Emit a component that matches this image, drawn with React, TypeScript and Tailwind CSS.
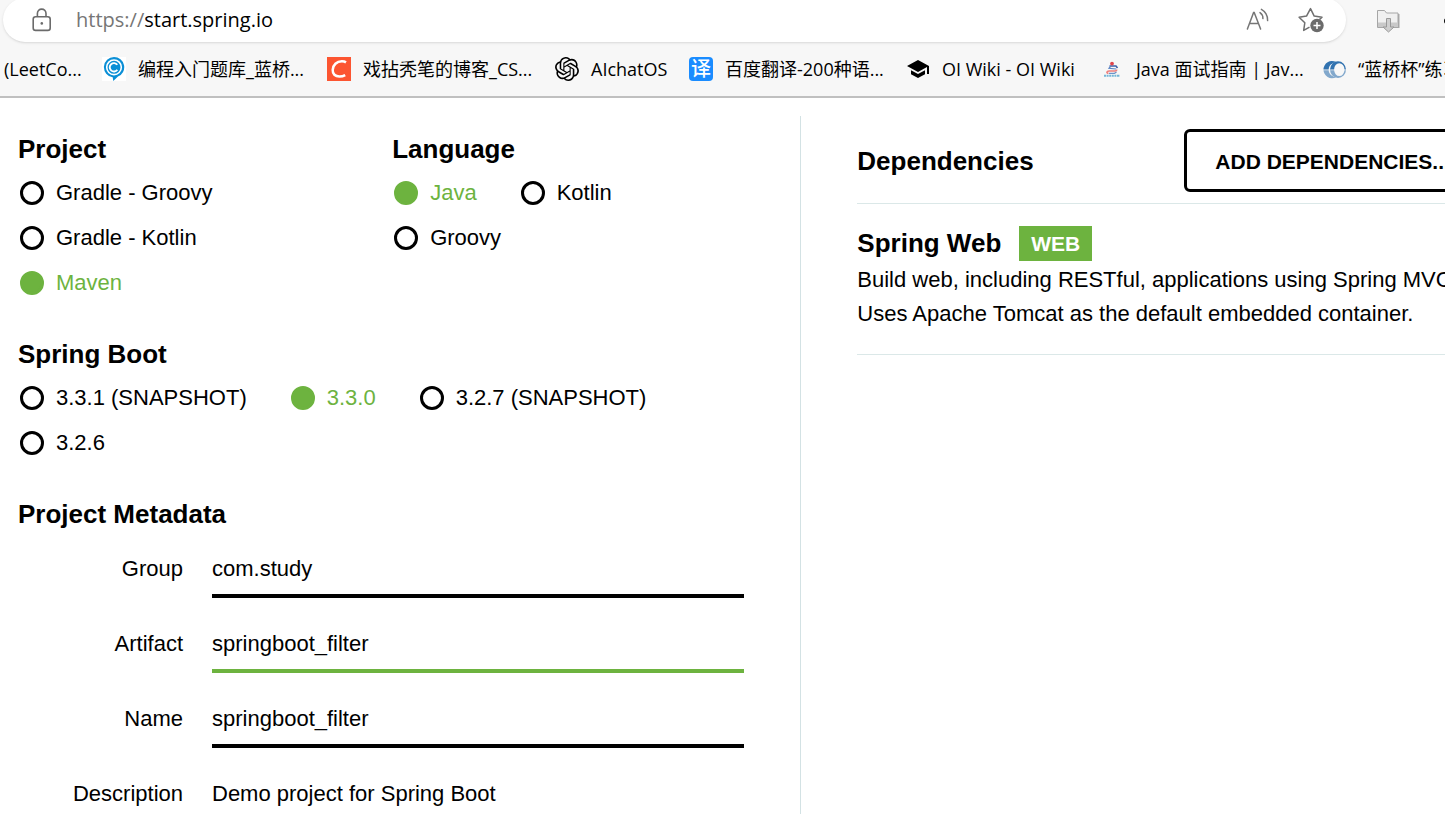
import { useState, type ReactNode } from 'react';
import { MdSchool } from 'react-icons/md';
import { SiOpenai } from 'react-icons/si';

interface Bookmark {
  title: string;
  width: string;
  icon?: ReactNode;
}

interface Option {
  id: string;
  label: string;
}

interface Field {
  id: string;
  label: string;
  value: string;
  active?: boolean;
}

const LockIcon = () => (
  <svg width="20" height="24" viewBox="0 0 20 24" fill="none" stroke="#6b6b6b" strokeWidth="1.6">
    <rect x="1.2" y="8.8" width="17" height="13.6" rx="2.4" />
    <path d="M5.4 8.6V5.4a4.3 4.3 0 0 1 8.6 0v3.2" />
    <circle cx="9.8" cy="15.4" r="1.3" fill="#6b6b6b" stroke="none" />
  </svg>
);

const ReadAloudIcon = () => (
  <svg width="24" height="24" viewBox="0 0 24 24" fill="none" stroke="#767676" strokeWidth="1.5" strokeLinecap="round">
    <path d="M1.4 21 7.6 4.4h.6L14.6 21M3.6 15.6h8.8" />
    <path d="M14 4.6c2 1.4 3 3.4 2.9 6M15.4 1.4c3.7 1.9 6.6 6.6 6.2 11.2" />
  </svg>
);

const StarIcon = () => (
  <svg width="26" height="26" viewBox="0 0 26 26" fill="none">
    <path
      d="M11.5 20.2 5.7 23.4l1.1-7.6L1.1 10.3l7.4-1.2L12.5 1.6l3.7 7.5 7.8 1.2-2.6 2.3"
      stroke="#6f6f6f"
      strokeWidth="1.5"
      strokeLinejoin="round"
    />
    <circle cx="19" cy="18.5" r="6.7" fill="#6b6b6b" />
    <path d="M19 15v7M15.5 18.5h7" stroke="#fff" strokeWidth="1.5" />
  </svg>
);

const DownloadFolderIcon = () => (
  <svg width="25" height="24" viewBox="0 0 25 24">
    <path d="M3 5h20.5v14H3z" fill="#a9a9a9" />
    <path d="M1.5 1.5h7L10.5 4H22v14.5H1.5z" fill="#f0f0f0" stroke="#a6a6a6" />
    <path d="M2 13.5h19.5V18H2z" fill="#c9c9c9" />
    <path d="M10.5 9.5h4V18H18l-5.5 5L7 18h3.5z" fill="#cfcfcf" stroke="#999" />
  </svg>
);

const LanqiaoIcon = () => (
  <svg width="24" height="24" viewBox="0 0 24 24">
    <path d="M0 0h24v24H0z" fill="#fff" />
    <path d="M12 0a10.2 10.2 0 0 1 4 19.6L11.3 24l-.6-3.7A10.2 10.2 0 0 1 12 0z" fill="#0b8fd6" />
    <circle cx="12" cy="10.3" r="7.3" fill="none" stroke="#fff" strokeWidth="1.6" />
    <path d="M15.3 7.8a4.2 4.2 0 1 0 0 5" fill="none" stroke="#fff" strokeWidth="1.9" />
  </svg>
);

const CsdnIcon = () => (
  <svg width="24" height="24" viewBox="0 0 24 24">
    <path d="M0 0h24v24H0z" fill="#fc5531" />
    <path
      d="M19 5.4c-1.2-.8-2.6-1.1-4.1-1.1C9.6 4.3 6 8 5.7 12.8c-.2 4.3 2.5 6.7 6.7 6.7 2 0 4-.4 5.800-1.400"
      fill="none"
      stroke="#fff"
      strokeWidth="2.5"
    />
  </svg>
);

const JavaGuideIcon = () => (
  <svg width="24" height="24" viewBox="0 0 24 24" fill="none">
    <path d="M9.500 9h6.500l1.500 2" stroke="#3d5fa8" strokeWidth="1.600" />
    <path d="M10.500 9.500 9 11.300l7 .7" stroke="#5a83c4" strokeWidth="1.200" />
    <circle cx="12" cy="6.600" r="1.900" fill="#e0444b" />
    <path d="M16.500 12.500c.8 1.400-1 1.600-3 1.600H9c-2.500 0-3 2-.5 2.200" stroke="#ee7f7c" strokeWidth="1.500" />
    <path d="M9 16.300h5.500l2-1.300" stroke="#6d92c8" strokeWidth="1.300" />
    <path d="M4 18.700h16" stroke="#74b6d8" strokeWidth="2" strokeDasharray="2 .6" />
  </svg>
);

const LanqiaoCupIcon = () => (
  <svg width="24" height="24" viewBox="0 0 24 24">
    <defs>
      <clipPath id="cup-top">
        <path d="M0 0h24v12.500H0z" />
      </clipPath>
      <clipPath id="cup-bottom">
        <path d="M0 13.200h24V24H0z" />
      </clipPath>
      <g id="cup-rings" fillRule="evenodd">
        <path d="M14 5A8.600 8.600 0 1 0 14 20.300 8 8 0 0 1 10.500 19 7 7 0 0 1 10.500 6.500 8 8 0 0 1 14 5z" />
        <path d="M16 4.200a8 8.400 0 1 1 0 16.800 8 8.400 0 1 1 0-16.800zM17.300 6.200a5.200 6.400 0 1 0 0 12.800 5.200 6.400 0 1 0 0-12.800z" />
      </g>
    </defs>
    <use href="#cup-rings" fill="#3273b0" clipPath="url(#cup-top)" />
    <use href="#cup-rings" fill="#82a8cc" clipPath="url(#cup-bottom)" />
  </svg>
);

const TranslateIcon = () => (
  <span className="flex size-6 items-center justify-center rounded bg-[#1a8cff] text-xl leading-none font-medium text-white">
    译
  </span>
);

const bookmarks: Bookmark[] = [
  { title: '(LeetCo...', width: 'w-[74px]' },
  { title: '编程入门题库_蓝桥...', width: 'w-[165px]', icon: <LanqiaoIcon /> },
  { title: '戏拈秃笔的博客_CS...', width: 'w-[168px]', icon: <CsdnIcon /> },
  { title: 'AIchatOS', width: 'w-[74px]', icon: <SiOpenai size={24} /> },
  { title: '百度翻译-200种语...', width: 'w-[157px]', icon: <TranslateIcon /> },
  { title: 'OI Wiki - OI Wiki', width: 'w-[134px]', icon: <MdSchool size={24} /> },
  { title: 'Java 面试指南 | Jav...', width: 'w-[162px]', icon: <JavaGuideIcon /> },
  { title: '“蓝桥杯”练习系统', width: 'w-[165px]', icon: <LanqiaoCupIcon /> },
];

const projects: Option[] = [
  { id: 'gradle-groovy', label: 'Gradle - Groovy' },
  { id: 'gradle-kotlin', label: 'Gradle - Kotlin' },
  { id: 'maven', label: 'Maven' },
];

const languages: Option[] = [
  { id: 'java', label: 'Java' },
  { id: 'kotlin', label: 'Kotlin' },
  { id: 'groovy', label: 'Groovy' },
];

const versions: Option[] = [
  { id: '3.3.1', label: '3.3.1 (SNAPSHOT)' },
  { id: '3.3.0', label: '3.3.0' },
  { id: '3.2.7', label: '3.2.7 (SNAPSHOT)' },
  { id: '3.2.6', label: '3.2.6' },
];

const fields: Field[] = [
  { id: 'group', label: 'Group', value: 'com.study' },
  { id: 'artifact', label: 'Artifact', value: 'springboot_filter', active: true },
  { id: 'name', label: 'Name', value: 'springboot_filter' },
  { id: 'description', label: 'Description', value: 'Demo project for Spring Boot' },
];

function BrowserBar() {
  return (
    <header className="overflow-hidden border-b-2 border-[#c0c0c0] bg-[#f7f7f7] font-['Open_Sans','Noto_Sans_CJK_SC',sans-serif]">
      <div className="flex items-center pl-[3px]">
        <div className="-mt-0.5 flex h-11 flex-1 items-center rounded-full bg-white pr-[22px] pl-[29px] shadow-sm">
          <LockIcon />
          <div className="ml-6 flex flex-1 text-xl text-black">
            <label htmlFor="address" className="text-[#767676]">
              https://
            </label>
            <input id="address" defaultValue="start.spring.io" className="min-w-0 flex-1 outline-none" />
          </div>
          <button aria-label="Read aloud" className="mr-7">
            <ReadAloudIcon />
          </button>
          <button aria-label="Add to favorites">
            <StarIcon />
          </button>
        </div>
        <button aria-label="Downloads" className="ml-[30px]">
          <DownloadFolderIcon />
        </button>
        <button aria-label="More" className="ml-[42px] w-0.5">
          <svg width="8" height="8" viewBox="0 0 8 8" className="max-w-none">
            <circle cx="4" cy="4" r="3" />
          </svg>
        </button>
      </div>
      <nav className="flex h-[54px] items-center gap-6 pl-1 text-lg whitespace-nowrap text-black">
        {bookmarks.map(({ title, width, icon }) => (
          <a key={title} href="#" className="flex shrink-0 items-center gap-3">
            {icon}
            <span className={width}>{title}</span>
          </a>
        ))}
      </nav>
    </header>
  );
}

interface OptionGroupProps {
  title: string;
  name: string;
  options: Option[];
  initial: string;
}

function OptionGroup({ title, name, options, initial }: OptionGroupProps) {
  const [selected, setSelected] = useState(initial);

  return (
    <fieldset>
      <legend className="mb-1.5 text-[26px] leading-[30px] font-bold">{title}</legend>
      <div className="flex flex-wrap gap-x-11 pl-0.5">
        {options.map((option) => (
          <label
            key={option.id}
            className={`flex h-[45px] items-center gap-3 ${selected === option.id ? 'text-[#6db33f]' : ''}`}
          >
            <input
              type="radio"
              name={name}
              checked={selected === option.id}
              onChange={() => setSelected(option.id)}
              className="size-6 shrink-0 appearance-none rounded-full border-3 border-black checked:border-[#6db33f] checked:bg-[#6db33f]"
            />
            {option.label}
          </label>
        ))}
      </div>
    </fieldset>
  );
}

function Metadata() {
  return (
    <section>
      <h2 className="text-[26px] leading-[30px] font-bold">Project Metadata</h2>
      <div className="mt-[13px]">
        {fields.map(({ id, label, value, active }) => (
          <div key={id} className="mb-[19px] flex h-14 items-stretch gap-[29px]">
            <label htmlFor={id} className="w-[165px] pt-[10px] text-right">
              {label}
            </label>
            <input
              id={id}
              defaultValue={value}
              className={`min-w-0 flex-1 border-b-4 outline-none ${active ? 'border-[#6db33f]' : 'border-black'}`}
            />
          </div>
        ))}
      </div>
    </section>
  );
}

function Dependencies() {
  return (
    <section className="overflow-hidden pt-[13px] pl-14">
      <div className="min-w-[680px]">
        <div className="flex items-center justify-between border-b border-[#dbe8e8] pb-[11px]">
          <h2 className="text-[26px] leading-[30px] font-bold">Dependencies</h2>
          <button className="h-[63px] w-[353px] rounded-md border-3 border-black pt-0.5 pl-7 text-left text-[21px] font-bold whitespace-nowrap">
            ADD DEPENDENCIES... CTRL + B
          </button>
        </div>
        <div className="border-b border-[#dbe8e8] pt-[22px] pb-[23px]">
          <div className="flex items-center gap-[18px]">
            <h3 className="text-[26px] leading-[35px] font-bold">Spring Web</h3>
            <span className="bg-[#6db33f] px-3 text-[21px] leading-[35px] font-bold text-white">WEB</span>
          </div>
          <p className="mt-0.5 leading-[34px] whitespace-nowrap">
            Build web, including RESTful, applications using Spring MVC.
            <br />
            Uses Apache Tomcat as the default embedded container.
          </p>
        </div>
      </div>
    </section>
  );
}

export default function App() {
  return (
    <div className="flex h-screen flex-col overflow-hidden bg-white font-['Liberation_Sans',Arial,sans-serif] text-[22px] text-black">
      <BrowserBar />
      <main className="grid min-h-0 flex-1 grid-cols-[61fr_49fr] pt-[18px]">
        <form className="flex flex-col gap-[34px] overflow-hidden border-r border-[#d3e2e4] pt-[18px] pr-14 pl-[18px]">
          <div className="grid grid-cols-2 gap-[22px]">
            <div className="pr-10">
              <OptionGroup title="Project" name="project" options={projects} initial="maven" />
            </div>
            <OptionGroup title="Language" name="language" options={languages} initial="java" />
          </div>
          <OptionGroup title="Spring Boot" name="boot" options={versions} initial="3.3.0" />
          <Metadata />
        </form>
        <Dependencies />
      </main>
    </div>
  );
}
